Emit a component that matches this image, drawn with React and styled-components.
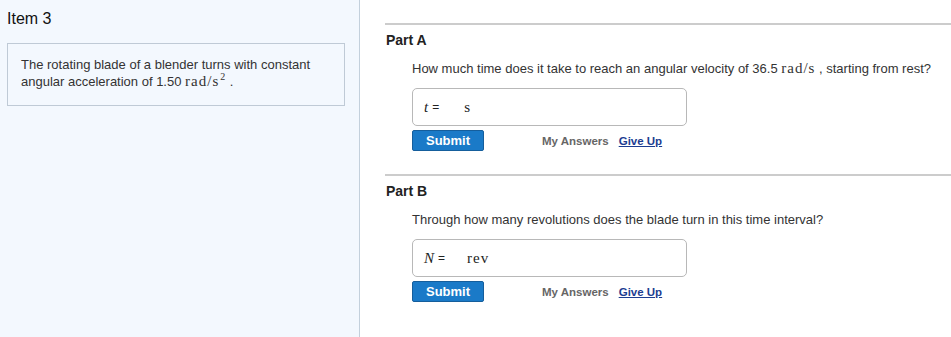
import React from 'react'
import styled, { createGlobalStyle } from 'styled-components'

const GlobalStyle = createGlobalStyle`
    body{
        margin: 0;
        background: #ffffff;
        font-family: "Liberation Sans", Arial, sans-serif;
    }
`

const Page = styled.div`
    display: flex;
    height: 337px;
    overflow: hidden;
`

const Sidebar = styled.div`
    width: 360px;
    flex-shrink: 0;
    background: #f3f8fe;
    border-right: 1px solid #c3d0dc;
    padding-top: 10px;
    box-sizing: border-box;
`

const ItemTitle = styled.h1`
    margin: 0 0 15px 7px;
    font-size: 16px;
    font-weight: normal;
    line-height: 18px;
    color: #111;
`

const Problem = styled.div`
    margin-left: 7px;
    width: 338px;
    box-sizing: border-box;
    border: 1px solid #bfcad6;
    padding: 12px 13px 15px;
    font-size: 13px;
    line-height: 17px;
    color: #333;
`

const Math = styled.span`
    font-family: "Liberation Serif", "Times New Roman", serif;
    font-size: 15px;
    letter-spacing: ${p => (p.italic ? 0 : 1)}px;
    font-style: ${p => (p.italic ? 'italic' : 'normal')};
`

const Sup = styled.sup`
    font-size: 10px;
    line-height: 0;
    margin-left: 1px;
`

const Main = styled.div`
    flex: 1;
    padding: 23px 0 0 25px;
`

const Part = styled.section`
    border-top: 2px solid #cccccc;
    padding-bottom: 23px;
`

const PartTitle = styled.h2`
    margin: 7px 0 0 1px;
    font-size: 14px;
    line-height: 16px;
    font-weight: bold;
    color: #222;
`

const Body = styled.div`
    padding-left: 27px;
`

const Question = styled.p`
    margin: 13px 0 12px;
    font-size: 13px;
    line-height: 15px;
    color: #333;
`

const AnswerBox = styled.div`
    width: 275px;
    height: 38px;
    box-sizing: border-box;
    border: 1px solid #b8b8b8;
    border-radius: 5px;
    background: #fff;
    display: flex;
    align-items: center;
    padding-left: 11px;
    color: #222;
`

const Equals = styled.span`
    font-size: 12px;
    margin: 0 ${p => p.gap}px 0 4px;
`

const Actions = styled.div`
    display: flex;
    align-items: center;
    margin-top: 4px;
`

const SubmitButton = styled.button`
    width: 72px;
    height: 21px;
    box-sizing: border-box;
    background: #1a7ac8;
    border: 1px solid #155e9c;
    border-radius: 2px;
    color: #fff;
    font-family: "Liberation Sans", Arial, sans-serif;
    font-weight: bold;
    font-size: 13px;
    padding: 0;
    margin-right: 58px;
`

const MyAnswers = styled.span`
    font-size: 11.5px;
    font-weight: bold;
    color: #666;
    margin-right: 10px;
`

const GiveUp = styled.a`
    font-size: 11.5px;
    font-weight: bold;
    color: #1c3d91;
    text-decoration: underline;
`

const Answer = ({ symbol, unit, gap }) => (
    <AnswerBox>
        <Math italic>{symbol}</Math>
        <Equals gap={gap}>=</Equals>
        <Math>{unit}</Math>
    </AnswerBox>
)

const Actionbar = () => (
    <Actions>
        <SubmitButton>Submit</SubmitButton>
        <MyAnswers>My Answers</MyAnswers>
        <GiveUp href="#">Give Up</GiveUp>
    </Actions>
)

const App = () => {
    return(
        <Page>
            <GlobalStyle />
            <Sidebar>
                <ItemTitle>Item 3</ItemTitle>
                <Problem>
                    The rotating blade of a blender turns with constant angular acceleration of 1.50 <Math>rad/s<Sup>2</Sup></Math> .
                </Problem>
            </Sidebar>
            <Main>
                <Part>
                    <PartTitle>Part A</PartTitle>
                    <Body>
                        <Question>
                            How much time does it take to reach an angular velocity of 36.5 <Math>rad/s</Math> , starting from rest?
                        </Question>
                        <Answer symbol="t" unit="s" gap={25} />
                        <Actionbar />
                    </Body>
                </Part>
                <Part>
                    <PartTitle>Part B</PartTitle>
                    <Body>
                        <Question>
                            Through how many revolutions does the blade turn in this time interval?
                        </Question>
                        <Answer symbol="N" unit="rev" gap={22} />
                        <Actionbar />
                    </Body>
                </Part>
            </Main>
        </Page>
    )
}

export default App
